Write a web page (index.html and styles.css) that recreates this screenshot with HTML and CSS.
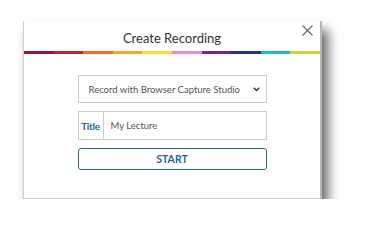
FILE: index.html
```html
<!DOCTYPE html>
<html lang="en">
<head>
    <meta charset="UTF-8">
    <title>Create Recording</title>
    <link rel="stylesheet" href="styles.css">
</head>
<body>
<div class="recording-modal">
    <div class="modal-header">
        <h3>Create Recording</h3>
        <button class="close-btn" aria-label="Close">
            <svg width="11" height="11" viewBox="0 0 11 11">
                <path d="M0.5 0.5 L10.5 10.5 M10.5 0.5 L0.5 10.5" stroke="#666" stroke-width="1.1" fill="none"/>
            </svg>
        </button>
    </div>
    <div class="rainbow-bar">
        <span style="background:#8a1c4c"></span>
        <span style="background:#c8203e"></span>
        <span style="background:#e8702c"></span>
        <span style="background:#f2ac23"></span>
        <span style="background:#f8e23a"></span>
        <span style="background:#ec8dc2"></span>
        <span style="background:#6a2c8b"></span>
        <span style="background:#2a2f88"></span>
        <span style="background:#2bb2dc"></span>
        <span style="background:#c9d93a"></span>
    </div>
    <form class="modal-body">
        <div class="select-box">
            <select id="source">
                <option>Record with Browser Capture Studio</option>
            </select>
            <svg width="7" height="5" viewBox="0 0 7 5">
                <path d="M0.8 0.8 L3.5 3.6 L6.2 0.8" stroke="#333" stroke-width="1.4" fill="none"/>
            </svg>
        </div>
        <div class="title-box">
            <label for="title">Title</label>
            <input type="text" id="title" value="My Lecture">
        </div>
        <button type="button" class="start-btn">START</button>
    </form>
</div>
</body>
</html>
```

FILE: styles.css
```css
body {
    margin: 0;
    background-color: #FFFFFF;
    font-family: 'Lato', sans-serif;
}
.recording-modal {
    position: relative;
    margin: 21px 0 0 23px;
    width: 296px;
    height: 177px;
    background-color: #FFFFFF;
    border: 1px solid #cfcfcf;
    border-right: 2px solid #b8b8b8;
    border-top: none;
    box-shadow: 6px 9px 11px rgba(0, 0, 0, 0.6);
}
.modal-header {
    height: 30px;
    display: flex;
    justify-content: center;
    align-items: center;
}
.modal-header h3 {
    margin: 0;
    font-weight: normal;
    font-size: 13px;
    color: #333333;
    padding-top: 4px;
}
.close-btn {
    position: absolute; /* sits in the corner over the header */
    top: 4px;
    right: 7px;
    padding: 0;
    border: none;
    background: none;
    cursor: pointer;
    line-height: 0;
}
.rainbow-bar {
    display: flex;
    height: 3px;
}
.rainbow-bar span {
    flex: 1;
}
.modal-body {
    display: flex;
    flex-direction: column;
    align-items: center;
    padding-top: 21px;
}
.select-box {
    width: 187px;
    height: 26px;
    border: 1px solid #cccccc;
    display: flex;
    align-items: center;
}
.select-box select {
    flex: 1;
    min-width: 0;
    height: 100%;
    border: none;
    outline: none;
    background: none;
    appearance: none;
    -webkit-appearance: none;
    padding: 0 0 0 10px;
    font-family: 'Lato', sans-serif;
    font-size: 9.5px;
    color: #555555;
}
.select-box svg {
    margin-right: 6px;
}
.title-box {
    width: 187px;
    height: 27px;
    margin-top: 8px;
    border: 1px solid #cccccc;
    display: flex;
}
.title-box label {
    width: 24px;
    border-right: 1px solid #cccccc;
    display: flex;
    align-items: center;
    justify-content: center;
    font-size: 10px;
    font-weight: bold;
    letter-spacing: -0.3px;
    color: #2a6592;
}
.title-box input {
    flex: 1;
    min-width: 0;
    border: none;
    outline: none;
    padding: 0 0 0 7px;
    font-family: 'Lato', sans-serif;
    font-size: 9.5px;
    color: #555555;
}
.start-btn {
    width: 189px;
    height: 22px;
    margin-top: 8px;
    border: 1.5px solid #2d6690;
    border-radius: 3px;
    background-color: #FFFFFF;
    font-family: 'Lato', sans-serif;
    font-size: 10.5px;
    font-weight: bold;
    color: #2a6592;
    cursor: pointer;
}
```
